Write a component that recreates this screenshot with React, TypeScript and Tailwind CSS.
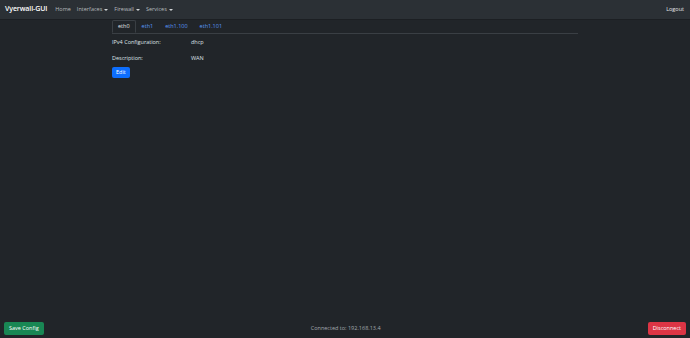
import { useState } from "react";

const tabs = ["eth0", "eth1", "eth1.100", "eth1.101"];

function Caret() {
  return (
    <span className="ml-[2px] inline-block w-0 h-0 border-l-[2px] border-r-[2px] border-t-[2.5px] border-l-transparent border-r-transparent border-t-[#d0d3d6] align-middle" />
  );
}

export default function App() {
  const [active, setActive] = useState("eth0");

  return (
    <div
      className="min-h-screen h-[338px] flex flex-col bg-[#212529] text-[#dee2e6]"
      style={{ fontFamily: '"Open Sans", "Noto Sans", sans-serif' }}
    >
      <nav className="h-[19px] shrink-0 bg-[#2b3035] flex items-center pl-[5px] pr-[6px] shadow-[0_1px_0_#1c1f23]">
        <span className="text-[7px] font-semibold text-white mr-[8px] tracking-[-0.1px]">Vyerwall-GUI</span>
        <div className="flex items-center gap-[6px] text-[5.5px] text-[#b6babe]">
          <span>Home</span>
          <span className="flex items-center">Interfaces<Caret /></span>
          <span className="flex items-center">Firewall<Caret /></span>
          <span className="flex items-center">Services<Caret /></span>
        </div>
        <span className="ml-auto text-[5.5px] text-[#e4e6e8]">Logout</span>
      </nav>

      <main className="flex-1">
        <div className="w-[466px] mx-auto pt-[1px]">
          <div className="flex border-b border-[#3a3f44] text-[5.5px] font-medium">
            {tabs.map((t) => (
              <button
                key={t}
                onClick={() => setActive(t)}
                className={
                  t === active
                    ? "h-[13px] px-[5px] -mb-px bg-[#212529] border border-[#3a3f44] border-b-[#212529] rounded-t-[2px] text-[#e4e6e8]"
                    : "h-[13px] px-[5px] border border-transparent text-[#5a9cfb]"
                }
              >
                {t}
              </button>
            ))}
          </div>

          <div className="text-[5.5px] text-[#dee2e6]">
            <div className="flex h-[16px] items-center">
              <span className="w-[79px]">IPv4 Configuration:</span>
              <span>dhcp</span>
            </div>
            <div className="flex h-[16px] items-center">
              <span className="w-[79px]">Description:</span>
              <span>WAN</span>
            </div>
            <button className="mt-[1px] h-[11px] px-[4px] rounded-[2px] bg-[#0d6efd] text-white text-[5.5px] leading-none">
              Edit
            </button>
          </div>
        </div>
      </main>

      <footer className="h-[17px] shrink-0 flex items-center justify-between px-[4px] pb-[2px]">
        <button className="h-[13px] px-[5px] rounded-[2px] bg-[#198754] text-white text-[5.5px] leading-none">
          Save Config
        </button>
        <span className="text-[5.5px] text-[#a3a8ad]">Connected to: 192.168.13.4</span>
        <button className="h-[13px] px-[5px] rounded-[2px] bg-[#dc3545] text-white text-[5.5px] leading-none">
          Disconnect
        </button>
      </footer>
    </div>
  );
}
